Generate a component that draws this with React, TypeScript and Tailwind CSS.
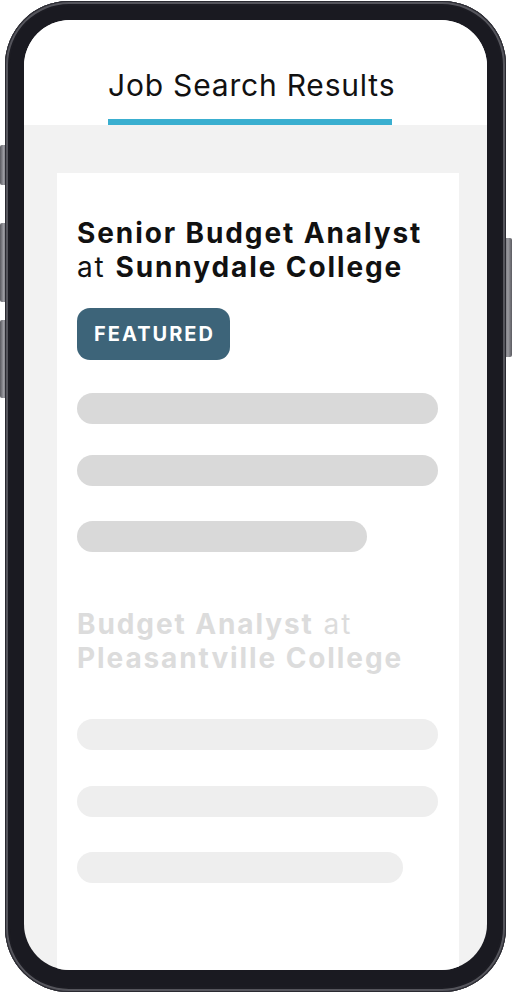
import React from "react";

const Bar = ({ w, tone, mt }: { w: string; tone: string; mt: string }) => (
  <div className={`${w} ${tone} ${mt} h-[31px] rounded-full`} />
);

export default function App() {
  return (
    <div className="relative w-[512px] h-[993px] bg-white overflow-hidden" style={{ fontFamily: "Inter, 'Noto Sans', sans-serif" }}>
      {/* side buttons */}
      <div className="absolute left-0 top-[145px] w-[7px] h-[40px] rounded-l-[2px] bg-gradient-to-r from-[#5a5a60] via-[#9a9aa0] to-[#6a6a70]" />
      <div className="absolute left-0 top-[223px] w-[7px] h-[79px] rounded-l-[2px] bg-gradient-to-r from-[#5a5a60] via-[#9a9aa0] to-[#6a6a70]" />
      <div className="absolute left-0 top-[320px] w-[7px] h-[78px] rounded-l-[2px] bg-gradient-to-r from-[#5a5a60] via-[#9a9aa0] to-[#6a6a70]" />
      <div className="absolute right-0 top-[238px] w-[8px] h-[119px] rounded-r-[2px] bg-gradient-to-l from-[#5a5a60] via-[#9a9aa0] to-[#6a6a70]" />

      {/* phone body */}
      <div className="relative ml-[5px] mt-[1px] w-[501px] h-[991px] rounded-[64px] bg-[#1a1a21] pt-[19px] pb-[22px] px-[19px] shadow-[inset_0_0_0_1px_#2a2a31,inset_0_0_0_3px_#55555c,inset_0_0_0_5px_#1c1c23]">
        {/* screen */}
        <div className="w-full h-full rounded-[46px] overflow-hidden bg-[#f2f2f2] flex flex-col">
          <div className="h-[105px] shrink-0 bg-white flex items-end pl-[84px]">
            <div className="text-[30px] leading-[36px] text-[#111111] tracking-[0.8px] pb-[16px] border-b-[6px] border-[#3aafd0] w-[284px] text-center whitespace-nowrap">
              Job Search Results
            </div>
          </div>
          <div className="flex-1 pt-[48px] pl-[33px] pr-[28px]">
            <div className="h-full bg-white pt-[43px] pl-[20px] pr-[22px] flex flex-col">
              <div className="text-[28px] leading-[34px] text-[#111111] tracking-[1.9px]">
                <div className="font-bold whitespace-nowrap">Senior Budget Analyst</div>
                <div className="whitespace-nowrap">
                  at <span className="font-bold">Sunnydale College</span>
                </div>
              </div>
              <div className="mt-[24px] w-[153px] h-[52px] rounded-[13px] bg-[#3d6479] flex items-center justify-center pl-[2px] text-white font-bold text-[20px] tracking-[2px]">
                FEATURED
              </div>
              <Bar w="w-[361px]" tone="bg-[#d9d9d9]" mt="mt-[33px]" />
              <Bar w="w-[361px]" tone="bg-[#d9d9d9]" mt="mt-[31px]" />
              <Bar w="w-[290px]" tone="bg-[#d9d9d9]" mt="mt-[35px]" />
              <div className="mt-[55px] text-[28px] leading-[34px] text-[#dcdcdc] tracking-[1.9px]">
                <div className="whitespace-nowrap">
                  <span className="font-bold">Budget Analyst</span> at
                </div>
                <div className="font-bold whitespace-nowrap">Pleasantville College</div>
              </div>
              <Bar w="w-[361px]" tone="bg-[#eeeeee]" mt="mt-[44px]" />
              <Bar w="w-[361px]" tone="bg-[#eeeeee]" mt="mt-[36px]" />
              <Bar w="w-[326px]" tone="bg-[#eeeeee]" mt="mt-[35px]" />
            </div>
          </div>
        </div>
      </div>
    </div>
  );
}
